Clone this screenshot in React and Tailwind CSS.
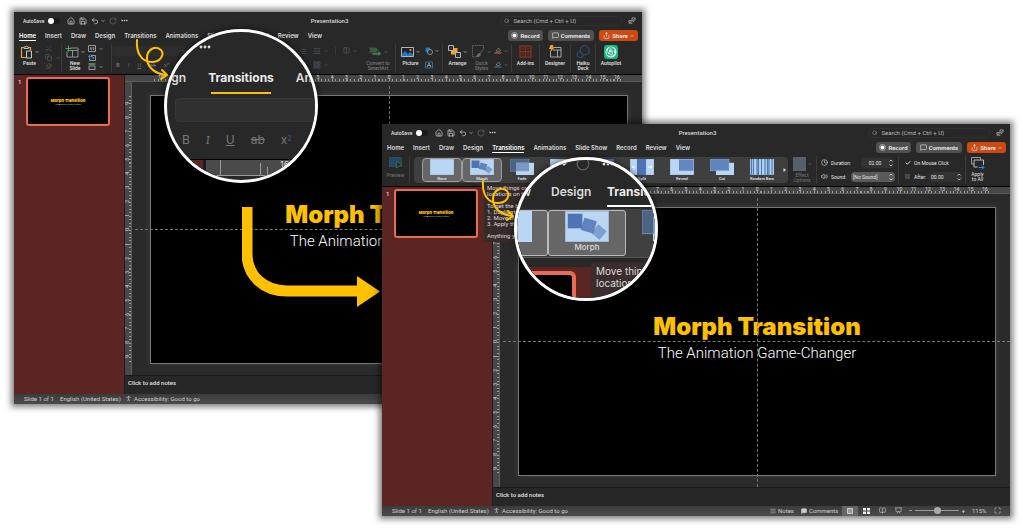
import React from 'react';
import clsx from 'clsx';
import {
  AlignJustify,
  BookOpen,
  Check,
  ChevronDown,
  Circle,
  Clock,
  Columns2,
  Copy,
  House,
  IndentDecrease,
  IndentIncrease,
  LayoutGrid,
  Maximize,
  MessageSquare,
  PaintbrushVertical,
  PersonStanding,
  Presentation,
  RotateCw,
  Save,
  Scissors,
  Search,
  Share,
  Undo2,
  Volume2,
} from 'lucide-react';

const TABS = ['Home', 'Insert', 'Draw', 'Design', 'Transitions', 'Animations', 'Slide Show', 'Record', 'Review', 'View'];
const EFFECTS = ['None', 'Morph', 'Fade', 'Push', 'Wipe', 'Split', 'Reveal', 'Cut', 'Random Bars'];
const H_MARKS = Array.from({ length: 33 }, (_, i) => Math.abs(i - 16));
const V_MARKS = Array.from({ length: 19 }, (_, i) => Math.abs(i - 9));

/* ---------- Small pieces ---------- */

function Caret({ className }) {
  return <ChevronDown className={clsx('w-1 h-1 shrink-0', className)} strokeWidth={4} />;
}

function Divider() {
  return <div className="w-px h-7 bg-[#3b3b3b] shrink-0" />;
}

function Dots({ className }) {
  return (
    <svg viewBox="0 0 12 4" className={className} fill="currentColor">
      <circle cx="2" cy="2" r="1.4" />
      <circle cx="6" cy="2" r="1.4" />
      <circle cx="10" cy="2" r="1.4" />
    </svg>
  );
}

function Stepper() {
  return (
    <svg viewBox="0 0 8 16" className="w-1 h-2 mr-[1px] shrink-0" fill="none" stroke="#ddd" strokeWidth="1.5">
      <path d="M1 5l3-3 3 3M1 11l3 3 3-3" />
    </svg>
  );
}

function RibbonButton({ label, className, dim, caret, children }) {
  return (
    <button className={clsx('flex flex-col items-center shrink-0 text-[5px] leading-[5px] font-medium', dim ? 'text-[#777]' : 'text-[#e4e4e4]', className)}>
      <span className="flex items-center gap-[2px] h-[14px] mb-[2px]">
        {children}
        {caret && <Caret />}
      </span>
      <span className="whitespace-pre-line text-center">{label}</span>
    </button>
  );
}

/* ---------- Ribbon drawings ---------- */

function PasteIcon() {
  return (
    <svg viewBox="0 0 26 28" className="w-[13px] h-[14px]" fill="none" strokeWidth="2.4">
      <path d="M8 5H3v20h9M17 5h4v6" stroke="#e8a63a" />
      <path d="M8 7V4h3a2 2 0 0 1 4 0h2v3z" stroke="#bdbdbd" strokeWidth="2" />
      <path d="M13 12h10v14H13z" stroke="#c8c8c8" strokeWidth="2" />
    </svg>
  );
}

function NewSlideIcon() {
  return (
    <svg viewBox="0 0 28 26" className="w-[14px] h-[13px]" fill="none" strokeWidth="2">
      <path d="M11 6h15v18H4V13M5 11h21M15 11v13" stroke="#8f8f8f" />
      <path d="M7 1v12M1 7h12" stroke="#3fae5c" />
    </svg>
  );
}

function LayoutIcon() {
  return (
    <svg viewBox="0 0 16 14" className="w-2 h-[7px]" fill="none" stroke="#999" strokeWidth="2">
      <path d="M1 1h14v12H1z" />
      <path d="M5 5h2v4H5zM10 5h2v4h-2z" strokeWidth="1.4" />
    </svg>
  );
}

function ResetIcon() {
  return (
    <svg viewBox="0 0 16 14" className="w-2 h-[7px]" fill="none" strokeWidth="2">
      <path d="M6 3h9v10H3V9M8 8h4" stroke="#999" />
      <path d="M10 5H2M5 1L1 5l4 4" stroke="#2b8be0" />
    </svg>
  );
}

function SectionIcon() {
  return (
    <svg viewBox="0 0 16 14" className="w-2 h-[7px]" fill="none" strokeWidth="2">
      <path d="M1 2h14" stroke="#3fae5c" strokeWidth="3" />
      <path d="M2 6h12v7H2z" stroke="#999" />
    </svg>
  );
}

function SmartArtIcon() {
  return (
    <svg viewBox="0 0 28 22" className="w-[14px] h-[11px]">
      <path d="M1 3h14l6 5-6 5H1l4-5z" fill="#365f42" />
      <path d="M8 13h12V9l7 6-7 6v-3H8z" fill="#4a7a58" stroke="#282828" />
    </svg>
  );
}

function PictureIcon() {
  return (
    <svg viewBox="0 0 26 20" className="w-[13px] h-[10px]">
      <path d="M1 1h24v18H1z" fill="#242424" stroke="#b5b5b5" strokeWidth="2" />
      <path d="M2 14l6-6 6 6 4-4 6 5v3H2z" fill="#1e78d2" />
      <circle cx="19" cy="6" r="2" fill="#e8a63a" />
    </svg>
  );
}

function ShapesIcon() {
  return (
    <svg viewBox="0 0 16 16" className="w-2 h-2">
      <path d="M1 1h9v9H1z" fill="#1e78d2" />
      <circle cx="10" cy="10" r="5" fill="#282828" stroke="#b5b5b5" strokeWidth="1.5" />
    </svg>
  );
}

function TextBoxIcon() {
  return (
    <svg viewBox="0 0 16 16" className="w-2 h-2" fill="none" stroke="#2b7cc4" strokeWidth="1.6">
      <path d="M1 2h14v12H1z" />
      <path d="M4 12l4-8 4 8M5 9h6" stroke="#aaa" />
    </svg>
  );
}

function ArrangeIcon() {
  return (
    <svg viewBox="0 0 26 26" className="w-[13px] h-[13px]">
      <path d="M6 6h13v13H6z" fill="#f0a42c" />
      <path d="M1 1h10v10H1zM15 15h10v10H15z" fill="#303030" stroke="#b5b5b5" strokeWidth="2" />
    </svg>
  );
}

function QuickStylesIcon() {
  return (
    <svg viewBox="0 0 26 26" className="w-[13px] h-[13px]" fill="none" stroke="#6d6d6d" strokeWidth="1.6">
      <path d="M9 24H1V1h22v6" strokeDasharray="3 1" />
      <path d="M24 7L15 18M15 17c-3 0-4 3-6 6 4 1 7 0 8-4z" fill="#6d6d6d" />
    </svg>
  );
}

function FillIcon({ color }) {
  return (
    <svg viewBox="0 0 16 14" className="w-2 h-[7px]" fill="none" stroke="#8b8b8b" strokeWidth="1.5">
      <path d="M4 8l5-6 4 5-3 2z" />
      <path d="M1 12h14" stroke={color} strokeWidth="3" />
    </svg>
  );
}

function AddInsIcon() {
  return (
    <svg viewBox="0 0 26 26" className="w-[13px] h-[13px]" fill="none" stroke="#93301c" strokeWidth="2.5">
      <path d="M2 2h22v22H2zM13 2v22M2 13h22" />
      <path d="M6 6h3v3H6zM17 6h3v3h-3zM6 17h3v3H6zM17 17h3v3h-3z" strokeWidth="1" />
    </svg>
  );
}

function DesignerIcon() {
  return (
    <svg viewBox="0 0 28 26" className="w-[14px] h-[13px]" fill="none">
      <path d="M10 5h16v19H5V13M10 10h16M19 10v14" stroke="#a5a5a5" strokeWidth="2" />
      <path d="M5 0h6L9 5h4L4 15l2-7H2z" fill="#f5a12c" />
    </svg>
  );
}

function HaikuIcon() {
  return (
    <svg viewBox="0 0 28 26" className="w-[14px] h-[13px]" fill="none" stroke="#2a5580" strokeWidth="2">
      <path d="M11 3l8-2 7 6v8l-6 5-8-2-4-7z" />
      <path d="M8 13l-5 3-1 6 5 3 6-1 2-4" />
    </svg>
  );
}

function AutopilotIcon() {
  return (
    <svg viewBox="0 0 28 28" className="w-[14px] h-[14px]" fill="none">
      <rect width="28" height="28" rx="6" fill="#10b981" />
      <circle cx="14" cy="14" r="11" fill="#d9f7ea" />
      <g stroke="#0d9f6e" strokeWidth="1.6">
        <path d="M14 5a5 5 0 0 1 5 5v8M14 5a5 5 0 0 0-5 5v4l7 4" />
        <path d="M22 10l-7-3-6 4M6 11l1 8 7 3M22 17l-8 5M6 17l3 3 7-4V8" />
      </g>
    </svg>
  );
}

function CollabIcon() {
  return (
    <svg viewBox="0 0 18 16" className="w-2 h-2" fill="none" stroke="#bbb" strokeWidth="1.6">
      <path d="M9 1h7v5h-4l-3 2zM2 7h5v4H2z" />
      <path d="M2 15c0-3 8-3 8 0M11 10l3-2" />
    </svg>
  );
}

/* ---------- Transition thumbnails ---------- */

function TransitionArt({ kind, className }) {
  return (
    <svg viewBox="0 0 48 34" preserveAspectRatio="none" className={className}>
      {!['Fade', 'Cut'].includes(kind) && <rect width="48" height="34" fill="#b9d6f4" stroke="#8d9cac" />}
      {kind === 'Morph' && (
        <g fill="#4f74b3">
          <rect x="3" y="3" width="16" height="16" />
          <rect x="19" y="9" width="14" height="14" opacity="0.85" transform="rotate(16 26 16)" />
          <rect x="31" y="17" width="12" height="12" opacity="0.55" transform="rotate(40 37 23)" />
        </g>
      )}
      {kind === 'Fade' && (
        <g>
          <rect x="0" y="0" width="38" height="26" fill="#4c6484" stroke="#7890b0" />
          <rect x="12" y="8" width="36" height="26" fill="#b9d6f4" />
          <rect x="12" y="8" width="26" height="18" fill="#7b98c2" />
        </g>
      )}
      {kind === 'Push' && <path d="M20 12h8v10h5l-9 9-9-9h5z" fill="#4f74b3" />}
      {kind === 'Wipe' && <rect x="24" width="24" height="34" fill="#4f74b3" />}
      {kind === 'Split' && (
        <g>
          <rect x="14" width="18" height="34" fill="#4f74b3" />
          <path d="M11 17H4l3-3M4 17l3 3M36 17h8l-3-3M44 17l-3 3" fill="none" stroke="#fff" strokeWidth="2" />
        </g>
      )}
      {kind === 'Reveal' && <rect x="18" y="1" width="29" height="24" fill="#6287c4" />}
      {kind === 'Cut' && (
        <g>
          <rect x="12" y="8" width="36" height="26" fill="#b9d6f4" />
          <rect x="0" y="0" width="38" height="25" fill="#5f85bd" stroke="#9cb4d4" />
        </g>
      )}
      {kind === 'Random Bars' && (
        <path d="M3 0v34M7 0v34M14 0v34M17 0v34M23 0v34M30 0v34M35 0v34M38 0v34M44 0v34" stroke="#4f7ab5" strokeWidth="2.5" />
      )}
    </svg>
  );
}

function EffectItem({ kind, selected }) {
  return (
    <button
      className={clsx(
        'flex flex-col items-center w-10 shrink-0 text-[4px] leading-[5px] font-medium text-[#e8e8e8] rounded-sm border',
        selected ? 'bg-[#666] border-[#9b9b9b]' : 'border-transparent',
      )}
    >
      <TransitionArt kind={kind} className="w-6 h-4 mb-[1px]" />
      {kind}
    </button>
  );
}

/* ---------- Ribbons ---------- */

function HomeRibbon() {
  return (
    <div className="flex items-center w-full px-1">
      <RibbonButton label="Paste" className="w-[23px] mb-[5px]" caret>
        <PasteIcon />
      </RibbonButton>
      <div className="flex flex-col gap-[2px] w-5 pl-1 text-[#666]">
        <Scissors className="w-[7px] h-[7px] -rotate-90 text-[#35506b]" />
        <span className="flex items-center gap-1"><Copy className="w-[7px] h-[7px]" /><Caret /></span>
        <PaintbrushVertical className="w-[7px] h-[7px] rotate-45 text-[#7d6440]" />
      </div>
      <Divider />
      <RibbonButton label={'New\nSlide'} className="w-[26px]" caret>
        <NewSlideIcon />
      </RibbonButton>
      <div className="flex flex-col gap-[2px] w-[23px] text-[#bbb]">
        <span className="flex items-center gap-[3px]"><LayoutIcon /><Caret /></span>
        <ResetIcon />
        <span className="flex items-center gap-[3px]"><SectionIcon /><Caret /></span>
      </div>
      <Divider />
      <div className="flex flex-col gap-[5px] text-[6px] leading-[8px] text-[#686868]">
        <div className="flex gap-2">
          <button aria-label="Font" className="flex items-center justify-end w-[75px] h-[10px] px-[2px] bg-[#2d2d2d] rounded-sm"><Caret /></button>
          <button aria-label="Font size" className="flex items-center justify-end w-[30px] h-[10px] px-[2px] bg-[#2d2d2d] rounded-sm"><Caret /></button>
        </div>
        <div className="flex gap-2 pl-1">
          <button className="font-bold">B</button>
          <button className="italic">I</button>
          <button className="underline">U</button>
          <button className="line-through">ab</button>
          <button>x²</button>
          <button>x₂</button>
        </div>
      </div>

      <div className="flex items-center ml-auto">
        <div className="flex flex-col gap-[6px] w-[25px] text-[#53616e]">
          <div className="flex gap-1"><IndentDecrease className="w-[7px] h-[7px]" /><IndentIncrease className="w-[7px] h-[7px]" /></div>
          <div className="flex gap-1"><AlignJustify className="w-[7px] h-[7px]" /><Columns2 className="w-[7px] h-[7px]" /></div>
        </div>
        <div className="flex flex-col gap-[6px] w-12 text-[#53616e]">
          <div className="flex items-center gap-[3px]">
            <AlignJustify className="w-2 h-2" /><Caret />
            <span className="w-px h-2 mx-1 bg-[#3b3b3b]" />
            <Columns2 className="w-[7px] h-[7px]" /><Caret />
          </div>
          <div className="flex items-center gap-[3px]"><LayoutGrid className="w-2 h-2" /><Caret /></div>
        </div>
        <RibbonButton label={'Convert to\nSmartArt'} className="w-[34px]" dim caret>
          <SmartArtIcon />
        </RibbonButton>
        <Divider />
        <RibbonButton label="Picture" className="w-[29px] mb-[5px]" caret>
          <PictureIcon />
        </RibbonButton>
        <div className="flex flex-col gap-[6px] w-[17px] text-[#bbb]">
          <span className="flex items-center gap-[2px]"><ShapesIcon /><Caret /></span>
          <TextBoxIcon />
        </div>
        <Divider />
        <RibbonButton label="Arrange" className="w-[29px] mb-[5px]" caret>
          <ArrangeIcon />
        </RibbonButton>
        <RibbonButton label={'Quick\nStyles'} className="w-[19px]" dim caret>
          <QuickStylesIcon />
        </RibbonButton>
        <div className="flex flex-col gap-[7px] w-[20px] pl-[3px] text-[#777]">
          <span className="flex items-center gap-[2px]"><FillIcon color="#a5522f" /><Caret /></span>
          <span className="flex items-center gap-[2px]"><FillIcon color="#2f628f" /><Caret /></span>
        </div>
        <Divider />
        <RibbonButton label="Add-ins" className="w-[27px] mb-[5px]"><AddInsIcon /></RibbonButton>
        <Divider />
        <RibbonButton label="Designer" className="w-[30px] mb-[5px]"><DesignerIcon /></RibbonButton>
        <Divider />
        <RibbonButton label={'Haiku\nDeck'} className="w-[24px]"><HaikuIcon /></RibbonButton>
        <Divider />
        <RibbonButton label="Autopilot" className="w-[30px] mb-[5px] mr-[12px]"><AutopilotIcon /></RibbonButton>
      </div>
    </div>
  );
}

function TransitionsRibbon() {
  return (
    <div className="flex items-center w-full text-[5px] leading-[6px] text-[#e4e4e4] whitespace-nowrap">
      <button className="flex flex-col items-center gap-[3px] w-[27px] mb-1 text-[#777]">
        <svg viewBox="0 0 28 24" className="w-[14px] h-[12px]">
          <path d="M1 1h24v18H1z" fill="#1f4a68" stroke="#555" />
          <path d="M15 9l11 6-11 7z" fill="#282828" stroke="#3c7a50" strokeWidth="1.5" />
        </svg>
        Preview
      </button>
      <Divider />
      <div className="flex flex-1 items-center h-[26px] ml-1 pl-2 bg-[#3f3f3f] rounded-sm overflow-hidden">
        {EFFECTS.map((kind) => (
          <EffectItem key={kind} kind={kind} selected={kind === 'None' || kind === 'Morph'} />
        ))}
        <button aria-label="More transitions" className="ml-auto mr-[2px]">
          <svg viewBox="0 0 6 8" className="w-[3px] h-1" fill="#ddd"><path d="M1 0l5 4-5 4z" /></svg>
        </button>
      </div>
      <button className="flex flex-col items-center w-[28px] text-[#777]">
        <span className="flex items-center gap-[2px] mb-[2px]"><span className="w-[13px] h-[14px] bg-[#56606c]" /><Caret /></span>
        <span className="leading-[5px] whitespace-pre-line">{'Effect\nOptions'}</span>
      </button>
      <Divider />
      <div className="flex flex-col gap-1 w-[81px] pl-1">
        <label className="flex items-center gap-[3px]">
          <Clock className="w-[7px] h-[7px]" />
          Duration:
          <span className="flex items-center ml-auto mr-1 bg-[#333] rounded-sm">
            <input defaultValue="02.00" className="w-7 h-[10px] text-center" />
            <Stepper />
          </span>
        </label>
        <label className="flex items-center gap-[3px]">
          <Volume2 className="w-[7px] h-[7px]" />
          Sound:
          <select className="appearance-none w-11 h-[10px] ml-auto px-[2px] bg-[#5a5a5a] rounded-sm">
            <option>[No Sound]</option>
          </select>
          <span className="-ml-[9px] mr-1"><Stepper /></span>
        </label>
      </div>
      <Divider />
      <div className="flex flex-col gap-1 w-[66px] pl-[6px]">
        <label className="flex items-center gap-[3px] h-[10px]">
          <input type="checkbox" defaultChecked className="peer sr-only" />
          <Check className="w-[6px] h-[6px]" strokeWidth={4} />
          On Mouse Click
        </label>
        <div className="flex items-center">
          <label className="flex items-center gap-1">
            <input type="checkbox" className="appearance-none w-[5px] h-[5px] bg-[#484848]" />
            After:
          </label>
          <span className="flex items-center ml-auto mr-[3px] bg-[#333] rounded-sm">
            <input aria-label="After delay" defaultValue="00.00" className="w-7 h-[10px] px-[2px]" />
            <Stepper />
          </span>
        </div>
      </div>
      <Divider />
      <button className="flex flex-col items-center w-[23px] mr-[21px]">
        <svg viewBox="0 0 28 26" className="w-[14px] h-[13px] mb-[2px]" fill="none" strokeWidth="2">
          <path d="M6 14H1V1h18v4" stroke="#999" />
          <path d="M13 20H6V6h19v10" stroke="#bbb" />
          <path d="M15 21h11M22 17l4 4-4 4" stroke="#2b8be0" />
        </svg>
        <span className="leading-[5px] whitespace-pre-line">{'Apply\nto All'}</span>
      </button>
    </div>
  );
}

/* ---------- Window parts ---------- */

function TitleBar() {
  return (
    <div className="grid grid-cols-3 items-center h-[17px] pl-[9px] pr-[6px] text-[6px] leading-[8px] text-[#d8d8d8]">
      <div className="flex items-center gap-1">
        <span className="flex items-center gap-1 mr-[3px] text-[5px] font-semibold">
          AutoSave
          <button role="switch" aria-checked="false" aria-label="AutoSave" className="flex items-center w-[12px] h-[6px] bg-[#1c1c1c] rounded-full">
            <span className="w-[6px] h-[6px] rounded-full bg-white" />
          </button>
        </span>
        <button aria-label="Home"><House className="w-2 h-2" /></button>
        <button aria-label="Save"><Save className="w-2 h-2" /></button>
        <button aria-label="Undo" className="flex items-center gap-[2px]"><Undo2 className="w-2 h-2" /><Caret /></button>
        <button aria-label="Redo" className="text-[#666]"><RotateCw className="w-2 h-2" /></button>
        <button aria-label="More"><Dots className="w-[7px] h-[3px]" /></button>
      </div>
      <div className="text-center font-medium">Presentation3</div>
      <div className="flex items-center justify-end gap-[6px]">
        <label className="flex items-center gap-1 w-[122px] h-[10px] px-[3px] border border-[#303030] rounded-sm">
          <Search className="w-[6px] h-[6px] text-[#aaa]" />
          <input aria-label="Search" placeholder="Search (Cmd + Ctrl + U)" className="w-full placeholder:text-[#b8b8b8]" />
        </label>
        <button aria-label="Collaborate"><CollabIcon /></button>
      </div>
    </div>
  );
}

function TabBar({ active }) {
  return (
    <div className="flex items-center justify-between h-[13px] px-1">
      <nav className="flex gap-[9px] pl-[1px] text-[6px] leading-[9px] font-semibold font-[Inter,sans-serif] text-[#dedede] whitespace-nowrap">
        {TABS.map((tab) => (
          <button key={tab} className={clsx('border-b', tab === active ? 'border-white text-white' : 'border-transparent')}>
            {tab}
          </button>
        ))}
      </nav>
      <div className="flex gap-[5px] text-[6px] leading-[8px] font-semibold text-[#eee]">
        <button className="flex items-center justify-center gap-[2px] w-[35px] h-[11px] rounded-[3px] bg-[#505050]">
          <svg viewBox="0 0 14 14" className="w-[7px] h-[7px]">
            <circle cx="7" cy="7" r="6" fill="none" stroke="#ddd" />
            <circle cx="7" cy="7" r="4" fill="#fff" />
          </svg>
          Record
        </button>
        <button className="flex items-center justify-center gap-[2px] w-[46px] h-[11px] rounded-[3px] bg-[#505050]">
          <MessageSquare className="w-[7px] h-[7px]" /> Comments
        </button>
        <button className="flex items-center justify-center gap-[2px] w-[39px] h-[11px] rounded-[3px] bg-[#cb4b12]">
          <Share className="w-[7px] h-[7px]" /> Share <Caret />
        </button>
      </div>
    </div>
  );
}

function SlideContent({ small }) {
  return (
    <div className={clsx('flex flex-col items-center justify-center w-full h-full bg-black whitespace-nowrap', small ? 'pb-0' : 'pb-2')}>
      <div className={clsx('font-[Inter,sans-serif] font-black text-[#ffc000]', small ? 'text-[4px] leading-[5px]' : 'text-2xl leading-7')}>
        Morph Transition
      </div>
      <div className={clsx('font-light text-white', small ? 'text-[2px] leading-[3px]' : 'mt-1 text-[15px] leading-4')}>
        The Animation Game-Changer
      </div>
    </div>
  );
}

function HorizontalRuler() {
  return (
    <div className="h-[7px] pl-[25px] pr-[14px] bg-[#474747] border-b border-[#5c5c5c] overflow-hidden">
      <div className="flex px-[4px] h-full text-[5px] text-[#ddd]">
        {H_MARKS.map((n, i) => (
          <span key={i} className="flex-1 min-w-0 flex flex-col items-center">
            <span className="h-1 leading-[4px]">{n}</span>
            <span className="w-full h-[2px] bg-[repeating-linear-gradient(90deg,#999_0_1px,transparent_1px_25%)]" />
          </span>
        ))}
      </div>
    </div>
  );
}

function VerticalRuler() {
  return (
    <div className="flex flex-col w-[7px] shrink-0 pt-[14px] pb-[11px] bg-[#474747] border-r border-[#5c5c5c] overflow-hidden text-[5px] leading-[4px] text-[#ddd]">
      {V_MARKS.map((n, i) => (
        <span key={i} className="flex flex-1 min-h-0 items-center">
          <span className="w-1 rotate-180 [writing-mode:vertical-rl]">{n}</span>
          <span className="w-[2px] h-full bg-[repeating-linear-gradient(180deg,#999_0_1px,transparent_1px_25%)]" />
        </span>
      ))}
    </div>
  );
}

function Editor() {
  return (
    <div className="flex border-t border-black">
      <aside className="flex items-start w-[110px] shrink-0 pt-[2px] pl-1 gap-1 bg-[#5a2522]">
        <span className="w-1 text-[6px] leading-[10px] font-semibold text-[#e8c8c0]">1</span>
        <button aria-label="Slide 1" className="w-[84px] h-[49px] border-2 border-[#e96a55] rounded-[3px] overflow-hidden">
          <SlideContent small />
        </button>
      </aside>
      <div className="w-px bg-[#1c1c1c]" />
      <main className="flex-1 min-w-0">
        <HorizontalRuler />
        <div className="flex">
          <VerticalRuler />
          <div className="relative flex-1 pl-[18px] pr-[14px] pt-[13px] pb-[11px] bg-[#2a2a2a]">
            <div className="aspect-video border border-[#777] shadow-[0_0_6px_rgba(120,120,120,0.3)]">
              <SlideContent />
            </div>
            <div className="absolute top-[147px] left-[3px] right-0 border-t border-dashed border-[#777]" />
            <div className="absolute top-1 bottom-0 left-1/2 ml-[2px] border-l border-dashed border-[#777]" />
          </div>
        </div>
        <div className="h-[19px] pt-[2px] pl-[3px] border-t border-[#1a1a1a] bg-[#272727] text-[6px] leading-[10px] font-medium text-[#e2e2e2]">
          Click to add notes
        </div>
      </main>
    </div>
  );
}

function StatusBar() {
  return (
    <div className="flex items-center h-[10px] pl-[10px] pr-[9px] bg-linear-to-b from-[#3c3c3c] to-[#4a4a4a] text-[6px] leading-[8px] text-[#cfcfcf]">
      <span className="w-9">Slide 1 of 1</span>
      <span className="w-[65px]">English (United States)</span>
      <span className="flex items-center gap-[2px]"><PersonStanding className="w-[7px] h-[7px]" />Accessibility: Good to go</span>
      <div className="flex items-center ml-auto">
        <button className="flex items-center gap-[2px] w-[31px]"><AlignJustify className="w-[6px] h-[6px]" />Notes</button>
        <button className="flex items-center gap-[2px] w-[41px]"><MessageSquare className="w-[6px] h-[6px]" fill="currentColor" />Comments</button>
        <button aria-label="Normal view" className="flex items-center justify-center w-4 h-[10px] bg-[#666]">
          <svg viewBox="0 0 12 12" className="w-[6px] h-[6px]" fill="none" stroke="#eee" strokeWidth="1.5"><path d="M1 1h10v10H1zM4 1v10M6 4h4M6 8h4" /></svg>
        </button>
        <button aria-label="Slide sorter" className="flex justify-center w-4">
          <svg viewBox="0 0 14 12" className="w-[7px] h-[6px]" fill="#eee"><path d="M0 0h6v5H0zM8 0h6v5H8zM0 7h6v5H0zM8 7h6v5H8z" /></svg>
        </button>
        <button aria-label="Reading view" className="flex justify-center w-4"><BookOpen className="w-[7px] h-[7px]" /></button>
        <button aria-label="Slide show" className="flex justify-center w-4"><Presentation className="w-[7px] h-[7px]" /></button>
        <button aria-label="Zoom out" className="w-[9px] text-center font-bold">−</button>
        <input
          type="range"
          aria-label="Zoom"
          defaultValue="52"
          className="appearance-none w-11 h-px bg-[#999] [&::-webkit-slider-thumb]:appearance-none [&::-webkit-slider-thumb]:w-[7px] [&::-webkit-slider-thumb]:h-[7px] [&::-webkit-slider-thumb]:rounded-full [&::-webkit-slider-thumb]:bg-[#aaa]"
        />
        <button aria-label="Zoom in" className="w-[9px] text-center font-bold">+</button>
        <span className="w-[26px] pl-1">115%</span>
        <button aria-label="Fit to window"><Maximize className="w-[7px] h-[7px]" /></button>
      </div>
    </div>
  );
}

function PowerPointWindow({ active, className, children }) {
  return (
    <section className={clsx('absolute bg-[#282828] shadow-[0_0_6px_3px_rgba(0,0,0,0.5)]', className)}>
      <TitleBar />
      <TabBar active={active} />
      <div className="flex h-8 pb-px">{active === 'Home' ? <HomeRibbon /> : <TransitionsRibbon />}</div>
      <Editor />
      <StatusBar />
      {children}
    </section>
  );
}

/* ---------- Callouts ---------- */

function CurlyArrow({ className }) {
  return (
    <svg viewBox="0 0 36 44" className={clsx('absolute w-9 h-11', className)} fill="none" stroke="#ffc000" strokeWidth="2" strokeLinecap="round" strokeLinejoin="round">
      <path d="M3 2C2 14 7 24 18 24C26 24 31 17 27 12C22 7 13 11 13 20C13 30 22 36 32 37" />
      <path d="M28 32L33 37L27 41" />
    </svg>
  );
}

function Lens({ className, children }) {
  return (
    <div className={clsx('absolute rounded-full border-[3px] border-white bg-[#282828] overflow-hidden shadow-[0_0_6px_rgba(0,0,0,0.7)] font-[Inter,sans-serif] text-[#dcdcdc]', className)}>
      {children}
    </div>
  );
}

function HomeLens() {
  return (
    <Lens className="top-[17px] left-[150px] w-[154px] h-[154px]">
      <div className="flex h-7 pt-[13px] pl-8"><Dots className="w-3 h-1" /></div>
      <div className="grid grid-cols-[minmax(0,1fr)_auto_minmax(0,1fr)] gap-[22px] pt-2 text-xs leading-5 font-semibold">
        <span className="flex justify-end">Design</span>
        <span className="font-bold text-[#eee]">Transitions</span>
        <span>Animations</span>
      </div>
      <div className="w-[60px] h-[2px] mx-auto mt-1 bg-[#ffc000]" />
      <div className="h-6 mt-1 ml-2 bg-[#303030] border border-[#383838] rounded-sm" />
      <div className="flex items-center gap-4 h-9 pl-[15px] text-xs text-[#777]">
        <span>B</span>
        <span className="italic font-serif">I</span>
        <span className="underline">U</span>
        <span className="line-through">ab</span>
        <span>x<sup className="text-[7px] text-[#35618c]">2</sup></span>
        <span>x</span>
      </div>
      <div className="flex h-6 mt-[1px] border-t border-black">
        <div className="w-[36px] bg-[#5a2522]" />
        <div className="w-[3px] bg-[#1c1c1c]" />
        <div className="flex-1 h-4 bg-[#4a4a4a] border-b border-[#999]">
          <div className="flex h-full items-end ml-[14px] border-l border-[#999]">
            <span className="w-px h-3 ml-[39px] bg-[#999]" />
            <span className="w-px h-2 ml-[6px] bg-[#999]" />
            <span className="self-start ml-3 text-[9px] leading-[9px]">16</span>
          </div>
        </div>
      </div>
    </Lens>
  );
}

function TransitionsLens() {
  return (
    <Lens className="top-[33px] left-[132px] w-36 h-36">
      <div className="flex items-center h-2 pl-[43px] text-[#ddd]">
        <ChevronDown className="w-2 h-2" strokeWidth={4} />
        <Circle className="w-[14px] h-[14px] ml-2 text-[#666]" strokeWidth={2} />
        <Dots className="w-3 h-1 ml-3" />
      </div>
      <div className="flex gap-5 h-[41px] pt-[15px] text-xs leading-[18px] font-semibold whitespace-nowrap">
        <span className="flex justify-end w-[14px]">Draw</span>
        <span className="w-9">Design</span>
        <span className="h-6 border-b-2 border-white font-bold text-[#eee]">Transitions</span>
      </div>
      <div className="flex items-start h-[49px] pt-[1px] bg-[#404040] border-b border-[#555]">
        <div className="w-[31px] h-[46px] shrink-0 pr-4 bg-[#666] border border-[#bbb] rounded-[3px]">
          <div className="w-[14px] h-[31px] bg-[#b9d6f4]" />
        </div>
        <div className="flex flex-col items-center w-[78px] h-[46px] shrink-0 bg-[#666] border border-[#bbb] rounded-[3px] text-[8px] leading-[10px] font-medium">
          <TransitionArt kind="Morph" className="w-11 h-[31px]" />
          Morph
        </div>
        <TransitionArt kind="Fade" className="w-11 h-[31px] ml-4 shrink-0" />
      </div>
      <div className="flex h-10 mt-[5px]">
        <div className="w-[74px] shrink-0 mt-1 pt-1 bg-[#5a2522]">
          <div className="w-[59px] h-9 border-t-4 border-r-4 border-[#e96a55] rounded-tr-md bg-black" />
        </div>
        <div className="flex-1 pt-[2px] pl-[5px] bg-[#3a2d2b] text-[10px] leading-3 whitespace-nowrap">
          Move things on the<br />locations on the
        </div>
      </div>
    </Lens>
  );
}

function MorphTooltip() {
  return (
    <div role="tooltip" className="absolute top-[60px] left-[102px] w-[60px] h-[58px] pt-[1px] pl-[3px] bg-[#372b29] text-[6px] leading-[6px] text-[#ddd] whitespace-nowrap overflow-hidden">
      <p>Move things on the<br />locations on the</p>
      <p className="mt-[6px]">To get the best<br />1. Duplicate<br />2. Move things<br />3. Apply the</p>
      <p className="mt-[6px]">Anything you</p>
    </div>
  );
}

function BigArrow() {
  return (
    <svg viewBox="0 0 138 101" className="absolute top-[195px] left-[228px] w-[138px] h-[101px]">
      <path d="M5 0V46C5 69 22 84 45 84H117" fill="none" stroke="#ffc000" strokeWidth="11" />
      <path d="M115 69L138 84.500L115 100z" fill="#ffc000" />
    </svg>
  );
}

export default function App() {
  return (
    <div className="relative min-h-screen w-full bg-white overflow-hidden font-[Roboto,sans-serif]">
      <PowerPointWindow active="Home" className="top-3 left-[14px] right-[382px]">
        <BigArrow />
        <HomeLens />
        <CurlyArrow className="top-[26px] left-[120px]" />
      </PowerPointWindow>
      <PowerPointWindow active="Transitions" className="top-[124px] left-[382px] right-[14px]">
        <MorphTooltip />
        <TransitionsLens />
        <CurlyArrow className="top-[55px] left-[98px]" />
      </PowerPointWindow>
    </div>
  );
}
